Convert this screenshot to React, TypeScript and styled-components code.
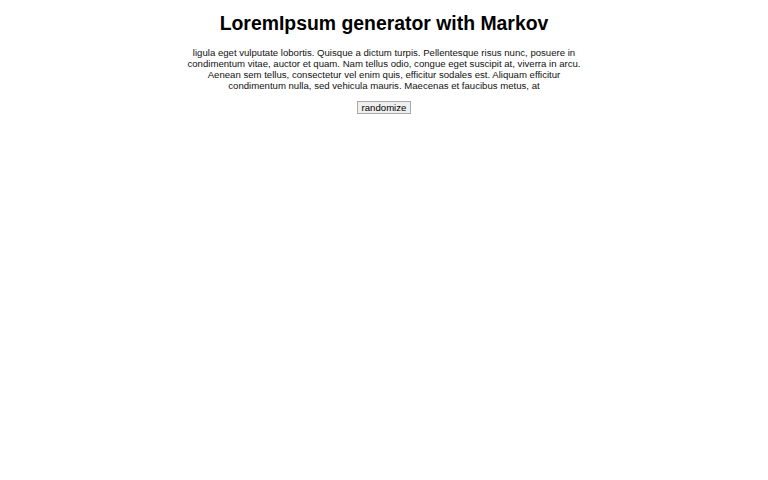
import styled, { createGlobalStyle } from "styled-components";

const GlobalStyle = createGlobalStyle`
  body {
    margin: 0;
    background: #fff;
    color: #000;
    font-family: "Liberation Sans", Arial, sans-serif;
  }
`;

const Container = styled.div`
  display: flex;
  flex-direction: column;
  align-items: center;
  padding-top: 12px;
`;

const Title = styled.h1`
  font-size: 19.4px;
  font-weight: 700;
  margin: 0 0 13px;
  line-height: 22px;
`;

const Text = styled.p`
  max-width: 396px;
  margin: 0 0 10px;
  font-size: 9.6px;
  line-height: 11px;
  text-align: center;
  color: #111;
`;

const Button = styled.button`
  font-family: "Liberation Sans", Arial, sans-serif;
  font-size: 9.6px;
  line-height: 11px;
  padding: 0 4px;
  background: #efefef;
  border: 1px solid #a9a9a9;
  border-radius: 0;
  color: #000;
`;

const lorem =
  "ligula eget vulputate lobortis. Quisque a dictum turpis. Pellentesque risus nunc, posuere in condimentum vitae, auctor et quam. Nam tellus odio, congue eget suscipit at, viverra in arcu. Aenean sem tellus, consectetur vel enim quis, efficitur sodales est. Aliquam efficitur condimentum nulla, sed vehicula mauris. Maecenas et faucibus metus, at";

function App() {
  return (
    <>
      <GlobalStyle />
      <Container>
        <Title>LoremIpsum generator with Markov</Title>
        <Text>{lorem}</Text>
        <Button>randomize</Button>
      </Container>
    </>
  );
}

export default App;
